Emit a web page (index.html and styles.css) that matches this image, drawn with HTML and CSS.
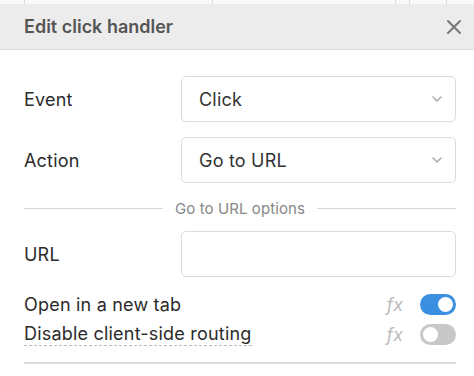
FILE: index.html
```html
<!DOCTYPE html>
<html>
<head>
<meta charset="utf-8">
<link rel="stylesheet" href="styles.css">
</head>
<body>
<div class="backdrop">
  <span class="cell c1"></span><span class="cell c2"></span><span class="cell c3"></span><span class="cell c4"></span><span class="cell c5"></span>
</div>
<div class="panel">
  <div class="header">
    <span class="title">Edit click handler</span>
    <svg class="close" width="16" height="16" viewBox="0 0 16 16"><path d="M2 2 L14 14 M14 2 L2 14" stroke="#777" stroke-width="2" stroke-linecap="round" fill="none"/></svg>
  </div>
  <div class="body">
    <div class="row">
      <span class="label">Event</span>
      <div class="select"><span>Click</span><svg class="chev" width="10" height="6" viewBox="0 0 10 6"><path d="M1 1 L5 5 L9 1" stroke="#aaa" stroke-width="1.5" fill="none" stroke-linecap="round" stroke-linejoin="round"/></svg></div>
    </div>
    <div class="row r2">
      <span class="label">Action</span>
      <div class="select"><span>Go to URL</span><svg class="chev" width="10" height="6" viewBox="0 0 10 6"><path d="M1 1 L5 5 L9 1" stroke="#aaa" stroke-width="1.5" fill="none" stroke-linecap="round" stroke-linejoin="round"/></svg></div>
    </div>
    <div class="divider"><span class="line"></span><span class="dtext">Go to URL options</span><span class="line"></span></div>
    <div class="row r3">
      <span class="label">URL</span>
      <div class="select input"></div>
    </div>
    <div class="trow t1">
      <span class="tlabel">Open in a new tab</span>
      <span class="fx">fx</span>
      <span class="toggle on"><span class="knob"></span></span>
    </div>
    <div class="trow t2">
      <span class="tlabel dotted">Disable client-side routing</span>
      <span class="fx">fx</span>
      <span class="toggle"><span class="knob"></span></span>
    </div>
    <div class="rule"></div>
  </div>
</div>
</body>
</html>
```
FILE: styles.css
```css
html, body { margin: 0; padding: 0; background: #fff; }
body { width: 474px; height: 376px; overflow: hidden; font-family: Inter, "Noto Sans", sans-serif; color: #2b2b2b; }
.backdrop { height: 4px; display: flex; background: #fafafa; }
.cell { height: 4px; border-right: 1px solid #ddd; }
.c1 { width: 24px; } .c2 { width: 187px; } .c3 { width: 182px; } .c4 { width: 13px; } .c5 { width: 36px; }
.header { height: 45px; background: #ececec; border-bottom: 1px solid #dcdcdc; display: flex; align-items: center; justify-content: space-between; padding: 0 12px 0 24px; }
.title { font-size: 18px; font-weight: 600; color: #555; margin-top: 0; }
.close { margin-top: 0; }
.body { padding: 26px 18px 0 24px; }
.row { display: flex; align-items: center; height: 46px; }
.r2 { margin-top: 15px; }
.r3 { margin-top: 13px; }
.label { width: 157px; font-size: 18px; letter-spacing: 0.2px; color: #2b2b2b; }
.select { flex: 1; height: 44px; border: 1px solid #dcdcdc; border-radius: 5px; display: flex; align-items: center; justify-content: space-between; padding: 0 13px 0 17px; font-size: 18px; letter-spacing: 0.2px; color: #333; }
.input { padding: 0; }
.divider { display: flex; align-items: center; height: 20px; margin-top: 15px; gap: 12px; }
.line { flex: 1; height: 1px; background: #d8d8d8; }
.dtext { font-size: 15px; letter-spacing: 0.1px; color: #888; }
.trow { display: flex; align-items: center; height: 22px; }
.t1 { margin-top: 16px; }
.t2 { margin-top: 8px; }
.tlabel { flex: 1; font-size: 18px; letter-spacing: 0.2px; color: #2b2b2b; }
.dotted { flex: 0 0 auto; border-bottom: 1px dashed #bbb; margin-right: auto; padding-bottom: 1px; }
.fx { font-family: Inter, sans-serif; font-style: italic; font-size: 18px; color: #bbb; margin-right: 17px; }
.toggle { width: 36px; height: 21px; border-radius: 11px; background: #c8c8c8; position: relative; }
.toggle.on { background: #3b8fe0; }
.knob { position: absolute; top: 3px; left: 3px; width: 15px; height: 15px; border-radius: 50%; background: #fff; }
.on .knob { left: 18px; }
.rule { height: 2px; background: #dcdcdc; margin-top: 17px; }
```
